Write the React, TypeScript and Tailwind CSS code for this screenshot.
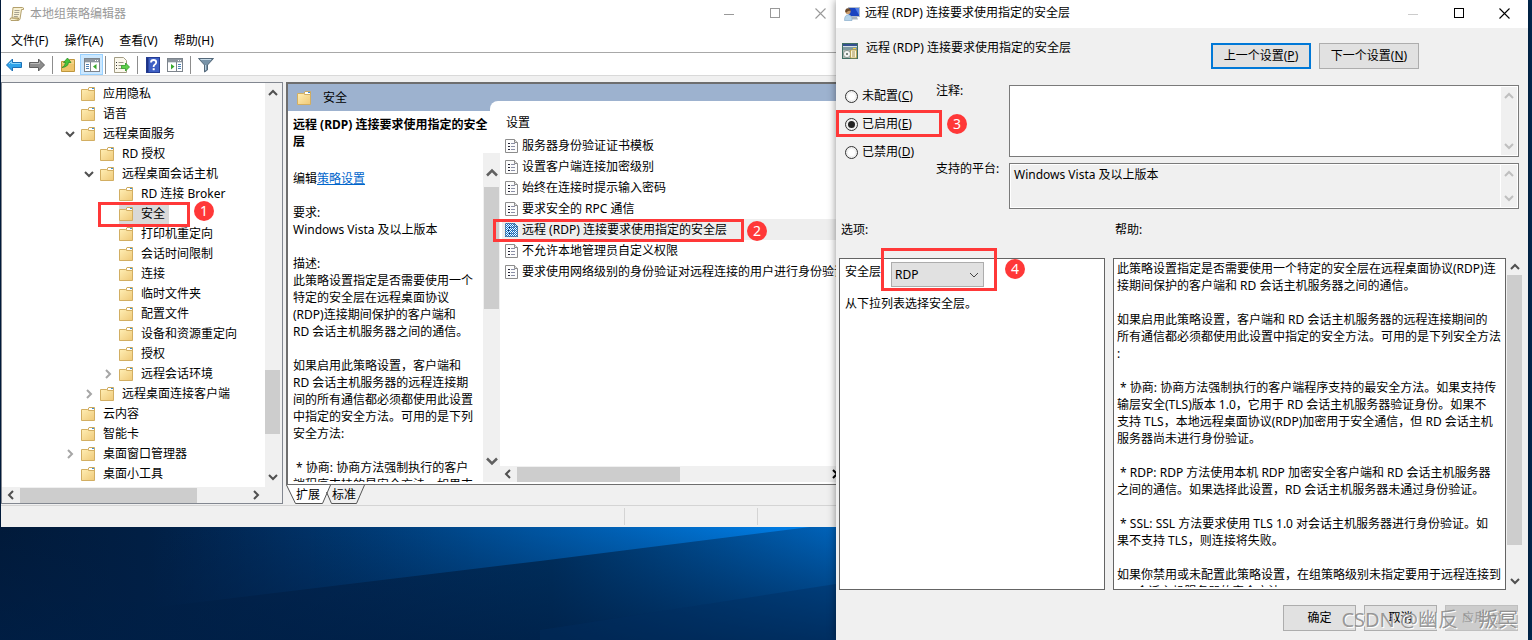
import React from 'react';
import { clsx } from 'clsx';

const treeData = [
  { label: '应用隐私', level: 0 },
  { label: '语音', level: 0 },
  { label: '远程桌面服务', level: 0, state: 'open' },
  { label: 'RD 授权', level: 1 },
  { label: '远程桌面会话主机', level: 1, state: 'open' },
  { label: 'RD 连接 Broker', level: 2 },
  { label: '安全', level: 2, selected: true },
  { label: '打印机重定向', level: 2 },
  { label: '会话时间限制', level: 2 },
  { label: '连接', level: 2 },
  { label: '临时文件夹', level: 2 },
  { label: '配置文件', level: 2 },
  { label: '设备和资源重定向', level: 2 },
  { label: '授权', level: 2 },
  { label: '远程会话环境', level: 2, state: 'closed' },
  { label: '远程桌面连接客户端', level: 1, state: 'closed' },
  { label: '云内容', level: 0 },
  { label: '智能卡', level: 0 },
  { label: '桌面窗口管理器', level: 0, state: 'closed' },
  { label: '桌面小工具', level: 0 },
];

const levelPadding = ['pl-[61px]', 'pl-[80px]', 'pl-[99px]'];

const settings = [
  '服务器身份验证证书模板',
  '设置客户端连接加密级别',
  '始终在连接时提示输入密码',
  '要求安全的 RPC 通信',
  '远程 (RDP) 连接要求使用指定的安全层',
  '不允许本地管理员自定义权限',
  '要求使用网络级别的身份验证对远程连接的用户进行身份验证',
];

const description = `要求:
Windows Vista 及以上版本

描述:
此策略设置指定是否需要使用一个
特定的安全层在远程桌面协议
(RDP)连接期间保护的客户端和
RD 会话主机服务器之间的通信。

如果启用此策略设置，客户端和
RD 会话主机服务器的远程连接期
间的所有通信都必须都使用此设置
中指定的安全方法。可用的是下列
安全方法:

 * 协商: 协商方法强制执行的客户
端程序支持的是安全方法。如果支`;

const helpText = `此策略设置指定是否需要使用一个特定的安全层在远程桌面协议(RDP)连
接期间保护的客户端和 RD 会话主机服务器之间的通信。

如果启用此策略设置，客户端和 RD 会话主机服务器的远程连接期间的
所有通信都必须都使用此设置中指定的安全方法。可用的是下列安全方法
:

 * 协商: 协商方法强制执行的客户端程序支持的最安全方法。如果支持传
输层安全(TLS)版本 1.0，它用于 RD 会话主机服务器验证身份。如果不
支持 TLS，本地远程桌面协议(RDP)加密用于安全通信，但 RD 会话主机
服务器尚未进行身份验证。

 * RDP: RDP 方法使用本机 RDP 加密安全客户端和 RD 会话主机服务器
之间的通信。如果选择此设置，RD 会话主机服务器未通过身份验证。

 * SSL: SSL 方法要求使用 TLS 1.0 对会话主机服务器进行身份验证。如
果不支持 TLS，则连接将失败。

如果你禁用或未配置此策略设置，在组策略级别未指定要用于远程连接到
RD 会话主机服务器的安全方法。`;

const chevrons = {
  up: 'M1 7 L5 3 L9 7',
  down: 'M1 3 L5 7 L9 3',
  left: 'M7 1 L3 5 L7 9',
  right: 'M3 1 L7 5 L3 9',
};

const Chevron = ({ dir, className = 'text-[#505050]', stroke = 2 }: { dir: keyof typeof chevrons; className?: string; stroke?: number }) => (
  <svg width="10" height="10" viewBox="0 0 10 10" className={clsx('shrink-0', className)}>
    <path d={chevrons[dir]} fill="none" stroke="currentColor" strokeWidth={stroke} />
  </svg>
);

const FolderIcon = () => (
  <svg width="16" height="16" viewBox="0 0 16 16" className="shrink-0">
    <defs>
      <linearGradient id="folderFill" x1="0" y1="0" x2="1" y2="1">
        <stop offset="0" stopColor="#ffeeb4" />
        <stop offset="1" stopColor="#efc978" />
      </linearGradient>
    </defs>
    <path d="M6.5 4.5 L8 1.5 H13.5 V5 H6.5 Z" fill="#eed28c" stroke="#cdaa5f" />
    <rect x="8" y="2" width="5" height="2" fill="#fff" />
    <rect x="11" y="2" width="2" height="1" fill="#3d8fd8" />
    <path d="M0.5 3.5 H6.5 L8 4.5 H13.5 V14.5 H0.5 Z" fill="url(#folderFill)" stroke="#d2ae62" />
  </svg>
);

const PolicyIcon = ({ selected = false }) => (
  <svg width="14" height="16" viewBox="0 0 14 16" className="shrink-0">
    <path d="M0.5 1.5 H9.5 L12.5 4.5 V14.5 H0.5 Z" fill="#fcfcfc" stroke="#8c8c8c" />
    <path d="M9.5 1.5 V4.5 H12.5" fill="#e4e4e4" stroke="#8c8c8c" />
    <path d="M3 5h2v1H3z M3 8h2v1H3z M3 11h2v1H3z" fill="#223" />
    <path d="M6 5.5h4 M6 8.5h4 M6 11.5h4" stroke="#8b8fa5" />
    {selected && (
      <>
        <pattern id="dither" width="2" height="2" patternUnits="userSpaceOnUse">
          <rect width="1" height="1" fill="#0a6fcb" />
          <rect x="1" y="1" width="1" height="1" fill="#0a6fcb" />
        </pattern>
        <path d="M0 1 H10 L13 4 V15 H0 Z" fill="url(#dither)" />
      </>
    )}
  </svg>
);

const ScrollIcon = () => (
  <svg width="16" height="16" viewBox="0 0 16 16">
    <path d="M4 1.5 H13.5 Q15 1.5 14.5 3.5 H12.5 L11 13 Q10.5 14.5 9 14.5 H2 Q0.5 14 1.5 12 H3 Z" fill="#f8f1d3" stroke="#b3a06c" />
    <path d="M3 12 H9.5 Q9 14.5 8.5 14.5" fill="#dfcf98" stroke="#a08c58" />
    <path d="M5.5 4.5h5 M5.3 6.5h5 M5 8.5h5 M4.8 10.5h4" stroke="#a7a291" />
  </svg>
);

const ArrowIcon = ({ forward = false }) => (
  <svg width="16" height="16" viewBox="0 0 16 16">
    {forward ? (
      <path d="M15.5 8 L9.5 2 V5.5 H0.5 V10.5 H9.5 V14 Z" fill="#8d8d8d" stroke="#5f5f5f" />
    ) : (
      <path d="M0.5 8 L6.5 2 V5.5 H15.5 V10.5 H6.5 V14 Z" fill="#2ea3ea" stroke="#1b6fb5" />
    )}
    <path d={forward ? 'M1.5 6.5 H10.5 V4.5' : 'M3 7 L5.5 4.5 V6.5 H14.5'} fill="none" stroke={forward ? '#b9b9b9' : '#8bd6fb'} />
  </svg>
);

const UpFolderIcon = () => (
  <svg width="16" height="16" viewBox="0 0 16 16">
    <path d="M1.5 4.5 H8 L9.5 2.5 H14.5 V14.5 H1.5 Z" fill="#f3d283" stroke="#bf973d" />
    <path d="M2 7 H14 V14 H2 Z" fill="#eec56b" />
    <path d="M2 10.5 Q5 9.5 5.5 5.5 H3.5 L7.5 1 L11 5.5 H8.5 Q8 10 2 10.5 Z" fill="#47c33a" stroke="#23861e" strokeWidth="0.7" />
  </svg>
);

const PaneIcon = ({ flipped = false }) => (
  <svg width="16" height="16" viewBox="0 0 16 16">
    <rect x="0.5" y="1.5" width="15" height="13" fill="#fff" stroke="#7d848c" />
    <rect x="1" y="2" width="14" height="3" fill="#8d969f" />
    <path d="M11 3.5h1 M13 3.5h1" stroke="#fff" />
    <path d="M1 5.5h14" stroke="#d8dde2" />
    <path d={flipped ? 'M9.5 5 V14' : 'M6.5 5 V14'} stroke="#7d848c" />
    <path d={flipped ? 'M11 7.5h3 M11 9.5h3 M11 11.5h3' : 'M2 7.5h3 M2 9.5h3 M2 11.5h3'} stroke="#4e83b8" />
    <path d={flipped ? 'M4 7 L7.5 9.5 L4 12.5 Z' : 'M12.5 7 L9 9.5 L12.5 12.5 Z'} fill="#37a92c" />
  </svg>
);

const ExportIcon = () => (
  <svg width="16" height="16" viewBox="0 0 16 16">
    <path d="M0.5 0.5 H9.5 L12.5 3.5 V15.5 H0.5 Z" fill="#fbf8ec" stroke="#a39d85" />
    <path d="M2 5.5h1 M2 8.5h1 M2 11.5h1" stroke="#333" />
    <path d="M4.5 5.5h5 M4.5 8.5h4 M4.5 11.5h4" stroke="#9a9785" />
    <path d="M7.5 8.5 H11.5 V6 L15.5 10 L11.5 14 V11.5 H7.5 Z" fill="#5fd04a" stroke="#2f9a26" strokeWidth="0.8" />
  </svg>
);

const HelpIcon = () => (
  <svg width="14" height="16" viewBox="0 0 14 16">
    <rect x="0.5" y="0.5" width="13" height="15" fill="#3d5fc4" stroke="#243c93" />
    <path d="M1.5 1 V15" stroke="#1d3384" strokeWidth="2" />
    <path d="M5 5.5 Q5 3 7.5 3 Q10.2 3 10.2 5.3 Q10.2 6.8 8.6 7.7 Q7.6 8.4 7.6 10" fill="none" stroke="#fff" strokeWidth="1.8" />
    <rect x="6.7" y="11.2" width="2" height="2" fill="#fff" />
  </svg>
);

const FilterIcon = () => (
  <svg width="16" height="16" viewBox="0 0 16 16">
    <path d="M0.5 1.5 H15.5 L9.5 8 V13 L6.5 15 V8 Z" fill="#7893a8" stroke="#55697a" />
    <path d="M2.5 2.5 H13" stroke="#c8dce9" />
    <path d="M7.5 8 V13" stroke="#b9d0de" />
  </svg>
);

const UserMonitorIcon = () => (
  <svg width="16" height="16" viewBox="0 0 16 16">
    <rect x="4.5" y="1.5" width="11" height="9" fill="#1a43c0" stroke="#b4bdc9" />
    <path d="M11 2 H15 V9 Z" fill="#4f7de6" />
    <path d="M8 11 H13 L14 13.5 H8 Z" fill="#a9b2bd" />
    <circle cx="4" cy="5.5" r="2.6" fill="#c99b6a" />
    <path d="M1.2 6 Q1 2 4.2 2.2 Q7 2.4 6.6 5 Q4 3.8 2.6 6.5 Z" fill="#6b4a2c" />
    <path d="M0.5 14.5 Q0.5 8.8 4.2 8.8 Q8 8.8 8 14.5 Z" fill="#b5d3ea" stroke="#7aa3c4" strokeWidth="0.6" />
  </svg>
);

const SettingIcon = () => (
  <svg width="16" height="16" viewBox="0 0 16 16">
    <rect width="16" height="16" fill="#3f6f63" />
    <rect x="1" y="1" width="14" height="2" fill="#33508f" />
    <rect x="1" y="3" width="14" height="1" fill="#d5e0e6" />
    <rect x="1" y="4" width="14" height="3" fill="#7f9aa0" />
    <path d="M11 5.5h3" stroke="#f2d13c" />
    <rect x="1" y="7" width="14" height="8" fill="#aebdb5" />
    <circle cx="5" cy="11" r="3.6" fill="#f2f5f2" stroke="#7d8882" strokeWidth="0.8" />
    <circle cx="5" cy="11" r="1" fill="#54605a" />
    <path d="M8.5 7 H14.5 V15 H8.5 Z" fill="#fdf6d8" stroke="#b89a3e" strokeWidth="0.8" />
    <path d="M10 9h3 M10 11h3 M10 13h3" stroke="#8c7a3e" strokeWidth="0.8" />
  </svg>
);

const WindowButtons = ({ tone, minTone }: { tone: string; minTone: string }) => (
  <div className="flex h-7 items-center gap-[15px]">
    <button aria-label="最小化" className={clsx('flex w-[31px] justify-center', minTone)}>
      <svg width="10" height="11"><path d="M0 5.5h10" stroke="currentColor" /></svg>
    </button>
    <button aria-label="最大化" className={clsx('flex w-[31px] justify-center pb-0.5', tone)}>
      <svg width="10" height="10"><rect x="0.5" y="0.5" width="9" height="9" fill="none" stroke="currentColor" /></svg>
    </button>
    <button aria-label="关闭" className={clsx('flex w-[31px] justify-center pb-0.5', tone)}>
      <svg width="11" height="11"><path d="M0.5 0.5 L10.5 10.5 M10.5 0.5 L0.5 10.5" stroke="currentColor" strokeWidth="1.1" /></svg>
    </button>
  </div>
);

const Badge = ({ n, className }: { n: number; className: string }) => (
  <span className={clsx('absolute z-20 flex size-5 items-center justify-center rounded-full bg-[#ff3838] text-sm leading-5 text-white', className)}>{n}</span>
);

const Mark = ({ className }: { className: string }) => (
  <span className={clsx('pointer-events-none absolute z-20 border-3 border-[#ff3838]', className)} />
);

const Separator = () => <span className="h-[18px] w-px bg-[#8d8d8d]" />;

const Wallpaper = () => (
  <svg className="absolute inset-0 -z-10 h-full w-full" viewBox="0 0 1532 640" preserveAspectRatio="none">
    <defs>
      <linearGradient id="base" x1="0" x2="1" y1="0" y2="0">
        <stop offset="0" stopColor="#011a3a" />
        <stop offset="0.2" stopColor="#012550" />
        <stop offset="0.36" stopColor="#00305f" />
        <stop offset="0.54" stopColor="#0062b8" />
        <stop offset="1" stopColor="#002a54" />
      </linearGradient>
      <linearGradient id="beam" x1="0" x2="1" y1="0" y2="0">
        <stop offset="0" stopColor="#00336c" stopOpacity="0" />
        <stop offset="0.5" stopColor="#004c92" />
        <stop offset="1" stopColor="#0080ea" />
      </linearGradient>
      <linearGradient id="shade" x1="0" x2="0" y1="0" y2="1">
        <stop offset="0" stopColor="#001f46" stopOpacity="0" />
        <stop offset="1" stopColor="#001f46" stopOpacity="0.75" />
      </linearGradient>
    </defs>
    <rect width="1532" height="640" fill="url(#base)" />
    <path d="M150 527 H810 L540 561 L150 608 Z" fill="url(#beam)" />
    <path d="M0 527 H836 V640 H0 Z" fill="url(#shade)" />
    <path d="M540 630 L836 584 V640 H540 Z" fill="#002e60" opacity="0.4" />
  </svg>
);

const TreeRow = ({ node }: { node: (typeof treeData)[number] }) => (
  <li className={clsx('flex h-5 items-center', levelPadding[node.level])}>
    <span className="flex w-[18px] justify-center pr-1">
      {node.state === 'open' && <Chevron dir="down" />}
      {node.state === 'closed' && <Chevron dir="right" className="text-[#a6a6a6]" />}
    </span>
    <span className={clsx('relative flex h-[19px] items-center gap-1.5 pr-1', node.selected && 'bg-[#d9d9d9]')}>
      <FolderIcon />
      {node.label}
      {node.selected && (
        <>
          <Mark className="-left-[21px] -top-[3px] h-[25px] w-[92px]" />
          <Badge n={1} className="-top-1 left-[75px]" />
        </>
      )}
    </span>
  </li>
);

const PolicyEditor = () => (
  <section className="ml-px flex flex-col bg-white">
    <header className="flex h-7 items-center pl-2">
      <ScrollIcon />
      <h1 className="flex-1 pl-[5px]">
        <span className="text-[#999]">本地组策略编辑器</span>
      </h1>
      <WindowButtons tone="text-[#999]" minTone="text-[#999]" />
    </header>
    <nav className="flex h-[25px] items-center gap-4 border-b border-[#a8a8a8] pl-2.5 pt-0.5">
      {['文件(F)', '操作(A)', '查看(V)', '帮助(H)'].map((item) => (
        <button key={item}>{item}</button>
      ))}
    </nav>
    <div className="flex h-[23px] items-center border-b border-[#d9d9d9] pl-[5px] pt-px">
      <div className="flex items-center gap-[7px]">
        <button aria-label="后退"><ArrowIcon /></button>
        <button aria-label="前进"><ArrowIcon forward /></button>
        <Separator />
        <button aria-label="上移"><UpFolderIcon /></button>
      </div>
      <button aria-label="显示树" className="ml-1 mr-0.5 flex h-[21px] w-[23px] items-center justify-center border border-[#99d1ff] bg-[#cce8ff]"><PaneIcon /></button>
      <div className="flex items-center gap-[7px]">
        <Separator />
        <button aria-label="导出" className="pl-px"><ExportIcon /></button>
        <Separator />
        <button aria-label="帮助" className="pl-px"><HelpIcon /></button>
        <button aria-label="操作窗格"><PaneIcon flipped /></button>
        <Separator />
        <button aria-label="筛选"><FilterIcon /></button>
      </div>
    </div>

    <div className="flex bg-[#f0f0f0] pt-1.5">
      {/* Console tree */}
      <div className="flex w-[282px] shrink-0 flex-col border border-[#828790] bg-white">
        <div className="flex flex-1">
          <ul className="flex-1 whitespace-nowrap pb-[3px] pt-px">
            {treeData.map((node) => <TreeRow key={node.label} node={node} />)}
          </ul>
          <div className="flex w-[17px] flex-col items-center bg-[#f0f0f0] py-[5px] pr-0.5">
            <Chevron dir="up" />
            <span className="mt-auto h-16 w-[15px] bg-[#cdcdcd]" />
            <span className="h-[38px]" />
            <Chevron dir="down" />
          </div>
        </div>
        <div className="flex h-4 items-center bg-[#f0f0f0] pl-1 pr-[21px]">
          <Chevron dir="left" />
          <span className="ml-1 h-[15px] w-[177px] bg-[#cdcdcd]" />
          <span className="flex-1" />
          <Chevron dir="right" />
        </div>
      </div>

      {/* Result pane */}
      <div className="ml-[3px] flex min-w-0 flex-1 flex-col">
        <div className="flex flex-1 flex-col border-b border-l-2 border-t-2 border-[#6e6e6e] bg-white">
          <div className="flex h-[27px] items-center bg-[#9db2cf] pl-[9px]">
            <FolderIcon />
            <span className="pl-2.5">安全</span>
          </div>
          <div className="flex flex-1">
            <div className="relative z-10 flex w-[212px] shrink-0 flex-col">
              <h2 className="whitespace-nowrap pl-[5px] pt-[5px] font-bold leading-[17px]">
                远程 (RDP) 连接要求使用指定的安全<br />层
              </h2>
              <div className="mb-0.5 mt-[3px] flex h-0 grow overflow-hidden">
                <div className="flex-1 whitespace-pre pl-[5px] pt-[17px] leading-[17px]">
                  <p className="pb-[17px]">编辑<a href="#policy" className="text-[#0066cc] underline">策略设置</a></p>
                  <p>{description}</p>
                </div>
                <div className="flex w-[17px] flex-col items-center bg-[#f0f0f0] pb-4 pt-[15px]">
                  <Chevron dir="up" className="scale-125 text-[#606060]" />
                  <span className="mt-[9px] h-[122px] w-[15px] bg-[#cdcdcd]" />
                  <span className="flex-1" />
                  <Chevron dir="down" className="scale-125 text-[#606060]" />
                </div>
              </div>
            </div>
            <div className="-ml-2.5 -mt-2.5 flex min-w-0 flex-1 flex-col rounded-tl-lg bg-white">
              <div className="pb-[3px] pl-4 pt-[13px] leading-[18px]">设置</div>
              <ul className="flex-1 whitespace-nowrap">
                {settings.map((name, i) => (
                  <li key={name} className={clsx('relative ml-3 flex h-[21px] items-center gap-[3px] pl-[3px]', i === 4 && 'bg-[#eee]')}>
                    <PolicyIcon selected={i === 4} />
                    <span className="w-0 flex-1 overflow-hidden">{name}</span>
                    {i === 4 && (
                      <>
                        <Mark className="-left-[9px] top-0 h-[23px] w-[251px]" />
                        <Badge n={2} className="left-[245px] top-0.5" />
                      </>
                    )}
                  </li>
                ))}
              </ul>
              <div className="mb-0.5 ml-2.5 flex h-4 items-center bg-[#f0f0f0] pl-[3px]">
                <Chevron dir="left" />
                <span className="ml-1 h-[15px] w-[163px] bg-[#cdcdcd]" />
                <span className="flex-1" />
                <Chevron dir="right" className="-mr-1" />
              </div>
            </div>
          </div>
        </div>
        <div className="relative flex h-[19px]">
          <svg width="82" height="19" className="absolute left-0 top-0">
            <path d="M0.5 0 L9.5 18.5 H36.5 L44.5 0 Z" fill="#fff" />
            <path d="M0.5 0 L9.5 18.5 H36.5 L44.5 0 M40.5 7 L45.5 18.5 H70.5 L78.5 0" fill="none" stroke="#555" />
          </svg>
          <button className="relative w-11">扩展</button>
          <button className="relative w-7">标准</button>
        </div>
      </div>
    </div>
    <footer className="flex h-[23px] bg-[#f0f0f0] pt-px">
      <div className="flex flex-1 justify-end border-t border-[#d4d4d4] py-0.5">
        <span className="w-[133px] border-l border-[#d4d4d4]" />
        <span className="w-[79px] border-l border-[#d4d4d4]" />
      </div>
    </footer>
  </section>
);

const states = [
  { label: '未配置', hotkey: 'C' },
  { label: '已启用', hotkey: 'E' },
  { label: '已禁用', hotkey: 'D' },
];

const FieldScroll = () => (
  <div className="flex w-4 flex-col items-center justify-between bg-[#f0f0f0] py-1">
    <Chevron dir="up" className="text-[#bfbfbf]" />
    <Chevron dir="down" className="text-[#bfbfbf]" />
  </div>
);

const SettingDialog = () => (
  <section className="relative flex h-screen w-[692px] shrink-0 flex-col bg-[#f0f0f0] shadow-[0_0_8px_rgba(0,0,0,0.45)]">
    <header className="flex h-7 items-center bg-white pl-2 pr-2">
      <UserMonitorIcon />
      <h1 className="flex-1 pb-0.5 pl-[5px]">远程 (RDP) 连接要求使用指定的安全层</h1>
      <WindowButtons tone="text-black" minTone="text-[#ccc]" />
    </header>

    <div className="flex pl-1.5 pt-[15px]">
      <span className="flex h-4"><SettingIcon /></span>
      <h2 className="flex-1 pl-2 leading-[10px]">远程 (RDP) 连接要求使用指定的安全层</h2>
      <div className="mr-[109px] flex gap-2">
        <button className="h-[26px] w-[100px] border-2 border-[#0078d7] bg-[#e1e1e1]">上一个设置(<u>P</u>)</button>
        <button className="h-[26px] w-[100px] border border-[#adadad] bg-[#e1e1e1]">下一个设置(<u>N</u>)</button>
      </div>
    </div>

    <div className="mt-4 flex pr-[9px]">
      <fieldset className="flex w-[100px] shrink-0 flex-col gap-1.5 pl-[9px]">
        {states.map((s, i) => (
          <label key={s.hotkey} className="relative flex h-[22px] items-center gap-1">
            <input
              type="radio"
              name="state"
              defaultChecked={i === 1}
              className="size-[13px] appearance-none rounded-full border border-[#333] bg-white bg-clip-content p-0.5 checked:bg-[#222]"
            />
            <span>{s.label}(<u>{s.hotkey}</u>)</span>
            {i === 1 && (
              <>
                <Mark className="-left-[9px] -top-[3px] h-[27px] w-[106px]" />
                <Badge n={3} className="left-[102px] top-px" />
              </>
            )}
          </label>
        ))}
      </fieldset>
      <div className="flex flex-1 flex-col gap-1.5">
        <div className="flex h-[72px]">
          <label htmlFor="comment" className="w-[73px] leading-3">注释:</label>
          <div className="flex flex-1 border border-[#7a7a7a] bg-white p-px">
            <textarea id="comment" className="flex-1 resize-none outline-none" />
            <FieldScroll />
          </div>
        </div>
        <div className="flex h-[46px]">
          <label htmlFor="platform" className="w-[73px] leading-3">支持的平台:</label>
          <div className="flex flex-1 border border-[#7a7a7a] bg-white p-px">
            <textarea id="platform" readOnly defaultValue="Windows Vista 及以上版本" className="mr-px flex-1 resize-none overflow-hidden bg-[#f0f0f0] pl-[3px] pt-px leading-[17px] outline-none" />
            <FieldScroll />
          </div>
        </div>
      </div>
    </div>

    <div className="mt-[13px] flex min-h-0 flex-1 gap-2 pl-[3px] pr-[5px]">
      <div className="flex w-[266px] flex-col">
        <h3 className="pb-5 pl-0.5 leading-4">选项:</h3>
        <div className="flex-1 border border-[#646464] bg-white pl-[5px] pt-[3px]">
          <div className="relative flex h-[25px]">
            <label htmlFor="layer" className="w-[46px] leading-5">安全层</label>
            <div className="relative flex w-[93px] border border-[#adadad] bg-[#e1e1e1]">
              <select id="layer" defaultValue="RDP" className="w-full appearance-none px-[3px] outline-none">
                <option>RDP</option>
                <option>SSL</option>
                <option>协商</option>
              </select>
              <Chevron dir="down" stroke={1} className="pointer-events-none absolute right-1 top-[7px] text-[#444]" />
            </div>
            <Mark className="-top-[14px] left-9 h-[43px] w-[116px]" />
            <Badge n={4} className="-top-[3px] left-[160px]" />
          </div>
          <p className="pt-2 leading-[18px]">从下拉列表选择安全层。</p>
        </div>
      </div>
      <div className="flex min-h-0 flex-1 flex-col">
        <h3 className="pb-5 pl-0.5 leading-4">帮助:</h3>
        <div className="flex min-h-0 flex-1">
          <div className="flex min-w-0 flex-1 border border-[#646464] bg-white pb-0.5 pl-[3px] pt-px">
            <p className="flex-1 overflow-hidden whitespace-pre leading-[17px]">{helpText}</p>
          </div>
          <div className="flex w-[17px] flex-col items-center py-1">
            <Chevron dir="up" />
            <span className="mt-[3px] h-[270px] w-[15px] bg-[#cdcdcd]" />
            <span className="flex-1" />
            <Chevron dir="down" />
          </div>
        </div>
      </div>
    </div>

    <footer className="relative flex justify-end gap-2 pb-[9px] pr-2.5 pt-[15px]">
      <button className="h-[26px] w-[73px] border border-[#adadad] bg-[#e1e1e1]">确定</button>
      <button className="h-[26px] w-[73px] border border-[#adadad] bg-[#e1e1e1]">取消</button>
      <button disabled className="h-[26px] w-[73px] border border-[#bfbfbf] bg-[#cccccc] text-[#a0a0a0]">应用(<u>A</u>)</button>
      <span className="pointer-events-none absolute bottom-2 right-2.5 whitespace-nowrap text-xl leading-6 text-[#808080]/80 [text-shadow:1px_1px_0_#fff]">CSDN @幽反丶叛冥</span>
    </footer>
  </section>
);

const App = () => {
  return (
    <main className="relative isolate flex min-h-screen items-start overflow-hidden pr-1 font-['Noto_Sans','Noto_Sans_CJK_SC',sans-serif] text-xs text-black">
      <Wallpaper />
      <div className="min-w-0 flex-1">
        <PolicyEditor />
      </div>
      <SettingDialog />
    </main>
  );
};

export default App;
